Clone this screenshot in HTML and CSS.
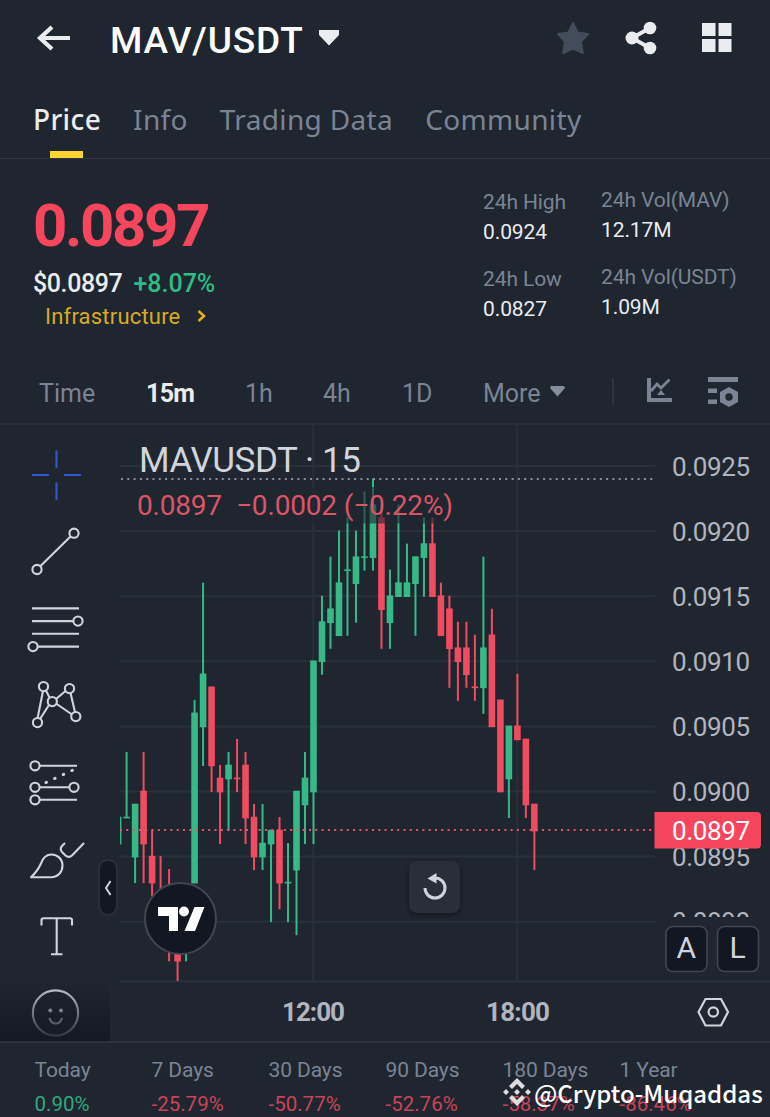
FILE: index.html
```
<!DOCTYPE html>
<html lang="en">
<head>
    <meta charset="UTF-8">
    <meta name="viewport" content="width=device-width, initial-scale=1.0">
    <title>MAV/USDT</title>
    <link rel="stylesheet" href="styles.css">
</head>
<body>
    <header class="header">
        <svg class="back" width="34" height="28" viewBox="0 0 34 28"><path d="M16 3L4 14L16 25M4 14H34" fill="none" stroke="#eaecef" stroke-width="4.200"/></svg>
        <h1 class="pair">MAV/USDT</h1>
        <svg class="pair-caret" width="20" height="16" viewBox="0 0 20 16"><path d="M0 0H20V5L10 15.500L0 5Z" fill="#eaecef"/></svg>
        <div class="header-icons">
            <svg width="34" height="34" viewBox="0 0 34 34"><path d="M17 2L21.500 11.500L32 13L25 20.500L26.800 32L17 27.500L7.200 32L9 20.500L2 13L12.500 11.500Z" fill="#434c5a" stroke="#434c5a" stroke-width="2" stroke-linejoin="round"/></svg>
            <svg width="34" height="34" viewBox="0 0 34 34"><path d="M26 7L8 17L26 27" fill="none" stroke="#eaecef" stroke-width="4"/><g fill="#eaecef"><circle cx="8" cy="17" r="6.500"/><circle cx="26" cy="7" r="6.300"/><circle cx="26" cy="27" r="6.300"/></g></svg>
            <svg width="30" height="30" viewBox="0 0 30 30"><path d="M0 0H13.500V13H0ZM16.500 0H29.500V13H16.500ZM0 16H13.500V29H0ZM16.500 16H29.500V29H16.500Z" fill="#eaecef"/></svg>
        </div>
    </header>

    <nav class="tabs">
        <a class="tab active">Price</a>
        <a class="tab">Info</a>
        <a class="tab">Trading Data</a>
        <a class="tab">Community</a>
    </nav>

    <section class="summary">
        <div class="price-box">
            <div class="last-price">0.0897</div>
            <div class="sub-price"><span>$0.0897</span><span class="up change">+8.07%</span></div>
            <div class="category">Infrastructure <svg width="9" height="14" viewBox="0 0 9 14"><path d="M1.500 2L7 7L1.500 12" fill="none" stroke="#e3b01c" stroke-width="2.600"/></svg></div>
        </div>
        <dl class="stats">
            <dt>24h High</dt><dd>0.0924</dd>
            <dt>24h Low</dt><dd>0.0827</dd>
        </dl>
        <dl class="stats volume">
            <dt>24h Vol(MAV)</dt><dd>12.17M</dd>
            <dt>24h Vol(USDT)</dt><dd>1.09M</dd>
        </dl>
    </section>

    <div class="intervals">
        <span>Time</span>
        <span class="selected">15m</span>
        <span>1h</span>
        <span>4h</span>
        <span>1D</span>
        <span>More <svg class="more-caret" width="15" height="11" viewBox="0 0 15 11"><path d="M1 0H14L15 2L7.500 10.500L0 2Z" fill="#848e9c"/></svg></span>
        <i class="divider"></i>
        <svg class="indicator" width="26" height="26" viewBox="0 0 26 26"><path d="M2 1V23H25" fill="none" stroke="#7b8494" stroke-width="4"/><path d="M4 14L10 7L14 11L22.500 2.500" fill="none" stroke="#7b8494" stroke-width="2.800"/><path d="M10 18L14 13L18 18Z" fill="#7b8494"/></svg>
        <svg width="31" height="32" viewBox="0 0 31 32"><path d="M0 1H30V6H0ZM0 12.500H9V17H0ZM0 23.500H9V28H0Z" fill="#7b8494"/><path d="M21 11L30 16V26L21 31L12 26V16Z" fill="#7b8494"/><circle cx="21" cy="21" r="3.700" fill="#1f2630"/></svg>
    </div>

    <main class="chart">
        <div class="toolbar">
            <svg class="tool cross" viewBox="0 0 110 76.800"><path d="M32 38H49M64 38H81M56.500 13.500V31M56.500 45.500V63"/></svg>
            <svg class="tool" viewBox="0 0 110 76.800"><path d="M40.500 52L70.500 22.500"/><circle cx="74" cy="19.200" r="4.600"/><circle cx="37" cy="55.500" r="4.600"/></svg>
            <svg class="tool" viewBox="0 0 110 76.800"><path d="M32 17.400H79M32 30.100H73M32 42.800H79M38 55.600H79"/><circle cx="78" cy="30.100" r="4.600"/><circle cx="33" cy="55.600" r="4.600"/></svg>
            <svg class="tool" viewBox="0 0 110 76.800"><path d="M37.600 51L43 24M46 23.500L49.500 30.500M56 32L65.500 24M70.500 26L75 45M56 36.500L72 47.500M49 38L40 52"/><circle cx="43.500" cy="19.600" r="4.600"/><circle cx="69.500" cy="21.600" r="4.600"/><circle cx="52.300" cy="34.600" r="4.600"/><circle cx="75.800" cy="49.600" r="4.600"/><circle cx="37.500" cy="55.600" r="4.600"/></svg>
            <svg class="tool" viewBox="0 0 110 76.800"><path d="M40 21.800H77M40 43.300H69M40 55.800H77"/><path class="dots" d="M46 38.500L73 26"/><circle cx="35" cy="21.800" r="4.600"/><circle cx="35" cy="43.300" r="4.600"/><circle cx="74" cy="43.300" r="4.600"/><circle cx="35" cy="55.800" r="4.600"/></svg>
            <svg class="tool" viewBox="0 0 110 76.800"><path d="M31 56.300C36 51.500 39 47 41 42.500C43 36.500 47 33.500 51.500 33.500C58 33.500 62.500 38.500 62.500 44.500C62.500 51 58 56.300 51 56.300Z"/><path d="M65 22L62 25Q59.500 28 62 31L65.500 34.500Q69 37.500 72.500 34L84 22"/></svg>
            <svg class="tool" viewBox="0 0 110 76.800"><path d="M41.500 27.500V22Q41.500 20.300 43.500 20.300H70Q72 20.300 72 22V27.500M56.700 20.300V56.300M51 56.300H62.500"/></svg>
            <svg class="tool" viewBox="0 0 110 76.800"><circle cx="55.500" cy="38" r="22.600"/><g class="face"><circle cx="50.300" cy="35.400" r="2"/><circle cx="61" cy="35.400" r="2"/></g><path d="M49.500 43Q51 48.500 55.700 48.500Q60.500 48.500 62 43"/></svg>
        </div>
        <svg class="plot" id="plot" width="660" height="616" viewBox="110 425 660 616">
            <g id="grid"></g>
            <g id="candles" clip-path="url(#pane)"></g>
            <defs><clipPath id="pane"><rect x="120" y="425" width="535" height="556"/></clipPath></defs>
            <path class="high-line" d="M121 479H655"/>
            <path class="last-line" d="M120 830H655"/>
            <rect class="legend-bg" x="130" y="487" width="326" height="36.500"/>
            <text class="symbol" x="139" y="471.500" textLength="222">MAVUSDT · 15</text>
            <text class="legend" x="137" y="515" textLength="85">0.0897</text>
            <text class="legend" x="236" y="515" textLength="217">−0.0002 (−0.22%)</text>
            <g id="labels"></g>
            <rect x="660" y="917" width="105" height="22" fill="#1f2630"/>
            <path class="tag" d="M654.500 812H757Q761 812 761 816V844.500Q761 848.500 757 848.500H654.500Z"/>
            <text class="axis tag-text" x="672" y="840" textLength="78">0.0897</text>
            <text class="axis time" x="282" y="1020.500" textLength="63">12:00</text>
            <text class="axis time" x="486" y="1020.500" textLength="64">18:00</text>
            <g class="key"><rect x="666" y="926.500" width="41" height="45" rx="7"/><rect x="717.500" y="926.500" width="41" height="45" rx="7"/></g>
            <text class="key-text" x="676.500" y="958">A</text>
            <text class="key-text" x="729.500" y="958">L</text>
            <path class="gear" d="M705.500 999H721L728 1012L721 1025.500H705.500L698.500 1012Z"/>
            <circle class="gear" cx="713.300" cy="1012" r="4.700"/>
        </svg>
        <div class="handle"><svg width="8" height="16" viewBox="0 0 8 16"><path d="M6.500 1L2 8L6.500 15" fill="none" stroke="#d1d4dc" stroke-width="2"/></svg></div>
        <div class="logo"><svg width="48" height="26" viewBox="0 0 48 26"><path d="M1 1H21V25H12V10H1ZM37.500 1H47.500L38 25H27.500Z" fill="#fff"/><circle cx="27" cy="5.500" r="4.900" fill="#fff"/></svg></div>
        <div class="reset"><svg width="26" height="28" viewBox="0 0 26 28"><path d="M3 15A10 10 0 1 0 13 5" fill="none" stroke="#d1d4dc" stroke-width="3"/><path d="M5.500 5.500L14.500 0V10.500Z" fill="#d1d4dc"/></svg></div>
    </main>

    <footer class="periods">
        <div><b>Today</b><span class="up">0.90%</span></div>
        <div><b>7 Days</b><span>-25.79%</span></div>
        <div><b>30 Days</b><span>-50.77%</span></div>
        <div><b>90 Days</b><span>-52.76%</span></div>
        <div><b>180 Days</b><span>-58.37%</span></div>
        <div><b>1 Year</b><span>-86.46%</span></div>
    </footer>

    <div class="watermark">
        <svg width="28" height="28" viewBox="0 0 28 28"><g fill="#dedede"><path d="M14 0L22 8L19 11L14 6L9 11L6 8ZM14 28L22 20L19 17L14 22L9 17L6 20ZM14 11L17 14L14 17L11 14ZM3 11L6 14L3 17L0 14ZM25 11L28 14L25 17L22 14Z"/></g></svg>
        <span>@Crypto-Muqaddas</span>
    </div>

    <script>
        // [open, high, low, close] in units of 0.0001, one candle per 15 minutes
        const candles = [
            [896, 898, 896, 898], [898, 903, 898, 898], [895, 899, 893, 899], [900, 903, 893, 896],
            [895, 897, 892, 893], [892, 895, 890, 891], [891, 894, 887, 890], [889, 891, 885, 887],
            [889, 891, 887, 890], [893, 907, 893, 906], [905, 916, 902, 909], [908, 908, 900, 902],
            [901, 902, 896, 900], [901, 903, 897, 902], [901.01, 904, 900, 901], [902, 903, 896, 898],
            [898, 899, 894, 895], [895, 899, 894, 896], [896, 897, 890, 897], [897, 898, 891, 893],
            [893, 896, 890, 893], [894, 900, 889, 900], [899, 903, 896, 901], [900, 910, 896, 910],
            [910, 915, 909, 913], [913, 918, 911, 914], [912, 920, 912, 916], [917, 921, 912, 917],
            [916, 920, 913, 918], [918, 923, 917, 918], [918, 924, 917, 922], [921, 922, 911, 914],
            [913, 917, 911, 915], [915, 922, 915, 916], [915, 919, 915, 916], [916, 918, 912, 918],
            [918, 921, 915, 919], [919, 921, 915, 915], [915, 916, 912, 912], [914, 915, 908, 911],
            [911, 913, 907, 910], [911, 913, 908, 909], [908.01, 912, 907, 908], [908, 918, 906, 911],
            [912, 914, 905, 905], [907, 907, 900, 900], [901, 905, 898, 905], [905, 909, 904, 904],
            [904, 904, 898, 899], [899, 899, 894, 897]
        ];
        const y = p => 466 + (925 - p) * 13.02;
        let grid = "", labels = "", bars = "";

        for (let p = 925; p >= 890; p -= 5) {
            grid += `<path d="M120 ${y(p)}H655"/>`;
            labels += `<text class="axis" x="672" y="${y(p) + 9.5}" textLength="78">0.0${p}</text>`;
        }
        grid += `<path d="M313.300 425V981M517.300 425V981M120 981.500H770"/>`;

        candles.forEach((c, i) => {
            const x = 313.5 + (i - 23) * 8.495;
            const [o, h, l, cl] = c;
            const top = y(Math.max(o, cl)) - 0.8;
            const height = y(Math.min(o, cl)) + 0.8 - top;
            bars += `<g fill="${cl >= o ? "#37b987" : "#ef4c61"}">`
                + `<rect x="${x - 1}" y="${y(h) - 0.5}" width="2" height="${y(l) - y(h) + 1}"/>`
                + `<rect x="${x - 3.3}" y="${top}" width="6.600" height="${height}"/></g>`;
        });

        document.getElementById("grid").innerHTML = grid;
        document.getElementById("labels").innerHTML = labels;
        document.getElementById("candles").innerHTML = bars;
    </script>
</body>
</html>
```

FILE: styles.css
```
* {
    box-sizing: border-box;
}

body {
    margin: 0;
    width: 770px;
    height: 1117px;
    overflow: hidden;
    position: relative;
    background-color: #1f2630;
    color: #eaecef;
    font-family: Roboto, "Liberation Sans", sans-serif;
}

svg {
    display: block;
    flex: none;
}

/* Header */
.header {
    display: flex;
    align-items: center;
    height: 79px;
    padding: 0 38px 3px 36px;
}

.pair {
    margin: 4px 0 0 40px;
    width: 192px;
    font-size: 37px;
    font-weight: 500;
    letter-spacing: 0.9px;
    color: #fff;
    white-space: nowrap;
}

.pair-caret {
    margin-left: 17px;
}

.header-icons {
    display: flex;
    align-items: center;
    gap: 44px;
    margin-left: auto;
}

.header-icons svg:nth-child(2) {
    margin: 0 0 0 -10px;
}

/* Tabs */
.tabs {
    display: flex;
    height: 80px;
    padding: 0 33px;
    gap: 32px;
    border-bottom: 1px solid #2d343f;
}

.tab {
    position: relative;
    line-height: 80px;
    font-family: "Noto Sans", sans-serif;
    font-size: 28px;
    letter-spacing: 0.35px;
    color: #7b8494;
    white-space: nowrap;
}

.tab.active {
    color: #eaecef;
    font-weight: 500;
}

.tab.active::after {
    content: "";
    position: absolute;
    left: 17px;
    bottom: 0;
    width: 33px;
    height: 7px;
    background-color: #fcd535;
}

/* Price summary */
.summary {
    display: flex;
    height: 201px;
    padding: 27px 0 0 33px;
}

.price-box {
    width: 450px;
}

.last-price {
    height: 80px;
    line-height: 80px;
    font-size: 60px;
    font-weight: 700;
    letter-spacing: -2.4px;
    color: #f6465d;
}

.sub-price {
    height: 34px;
    line-height: 35px;
    font-size: 25px;
    font-weight: 500;
    letter-spacing: -0.4px;
}

.change {
    margin-left: 11px;
    letter-spacing: 0;
}

.up {
    color: #2ebd85;
}

.category {
    display: flex;
    align-items: center;
    gap: 17px;
    padding-left: 12px;
    height: 32px;
    font-size: 22px;
    letter-spacing: 0.2px;
    color: #d9ab25;
}

.stats {
    width: 118px;
    margin: 1px 0 0;
    font-size: 21px;
    letter-spacing: -0.1px;
    white-space: nowrap;
}

.stats.volume {
    margin-top: -1px;
}

.stats dt {
    height: 30px;
    line-height: 30px;
    color: #7b8494;
}

.stats dd {
    height: 47px;
    line-height: 30px;
    margin: 0;
}

/* Interval row */
.intervals {
    display: grid;
    grid-template-columns: 107px 99px 78px 79px 81px 129px 35px 61px 40px;
    align-items: center;
    height: 65px;
    padding-left: 39px;
    border-bottom: 2px solid #272d38;
    font-size: 25px;
    color: #7b8494;
}

.intervals span {
    padding-top: 4px;
}

.intervals .selected {
    color: #eaecef;
    font-weight: 700;
    letter-spacing: -0.7px;
}

.more-caret {
    display: inline-block;
    margin: 0 0 5px 3px;
}

.indicator {
    margin-bottom: 3px;
}

.divider {
    width: 2px;
    height: 27px;
    background-color: #2d343f;
}

/* Chart */
.chart {
    display: flex;
    position: relative;
    height: 616px;
    overflow: hidden;
}

.toolbar {
    position: relative;
    width: 110px;
    height: 616px;
    padding-top: 12px;
    overflow: hidden;
}

.toolbar::after {
    content: "";
    position: absolute;
    left: 0;
    right: 0;
    bottom: 0;
    height: 60px;
    background: linear-gradient(rgba(19, 23, 34, 0), rgba(19, 23, 34, 0.9));
}

.tool {
    width: 110px;
    height: 76.8px;
    fill: none;
    stroke: #d1d4dc;
    stroke-width: 2.1;
    stroke-linejoin: round;
}

.tool.cross {
    stroke: #3159cf;
}

.tool .dots {
    stroke-width: 3;
    stroke-linecap: round;
    stroke-dasharray: 0.5 9;
}

.tool .face {
    fill: #d1d4dc;
    stroke: none;
}

#grid path {
    fill: none;
    stroke: #29303a;
    stroke-width: 2;
}

.high-line,
.last-line {
    stroke: #8a909c;
    stroke-width: 2;
    stroke-dasharray: 2 4.3;
}

.last-line {
    stroke: #e0566b;
}

.legend-bg {
    fill: #1f2630;
    fill-opacity: 0.6;
}

.symbol {
    font-size: 35px;
    fill: #d1d4dc;
}

.legend {
    font-size: 28px;
    fill: #dc5468;
}

.axis {
    font-size: 26px;
    fill: #b2b5be;
}

.tag {
    fill: #f6465d;
}

.tag-text {
    fill: #fff;
}

.time {
    font-weight: 700;
}

.key rect {
    fill: #131722;
    stroke: #434651;
    stroke-width: 1.6;
}

.key-text {
    font-size: 30px;
    fill: #d1d4dc;
}

.gear {
    fill: none;
    stroke: #d1d4dc;
    stroke-width: 2.2;
}

.handle,
.logo,
.reset {
    position: absolute;
    display: flex;
    align-items: center;
    justify-content: center;
}

.handle {
    left: 98px;
    top: 434px;
    width: 20px;
    height: 57px;
    border: 2px solid #2a2e39;
    border-radius: 10px;
    background-color: #131722;
}

.logo {
    left: 144px;
    top: 457px;
    width: 73px;
    height: 73px;
    border: 2px solid #434651;
    border-radius: 50%;
    background-color: #131722;
}

.reset {
    left: 409px;
    top: 436px;
    width: 51px;
    height: 52px;
    border-radius: 8px;
    background-color: #2a2e39;
    box-shadow: 0 2px 5px rgba(0, 0, 0, 0.4);
}

/* Performance by period */
.periods {
    display: grid;
    grid-template-columns: repeat(6, 117px);
    height: 76px;
    padding: 11px 0 0 34.5px;
    border-top: 2px solid #2b323c;
    overflow: hidden;
    white-space: nowrap;
}

.periods b {
    display: block;
    height: 34px;
    line-height: 32px;
    font-size: 21px;
    font-weight: 400;
    letter-spacing: -0.1px;
    color: #7b8494;
}

.periods span {
    display: block;
    line-height: 33px;
    font-size: 20.5px;
    color: #c94459;
}

.periods .up {
    color: #35a67c;
}

.watermark {
    position: absolute;
    left: 503px;
    top: 1077px;
    display: flex;
    align-items: center;
    gap: 3px;
    height: 30px;
    font-family: "Noto Sans CJK SC", "Noto Sans", sans-serif;
    font-size: 24px;
    font-weight: 500;
    color: #fff;
}
```
